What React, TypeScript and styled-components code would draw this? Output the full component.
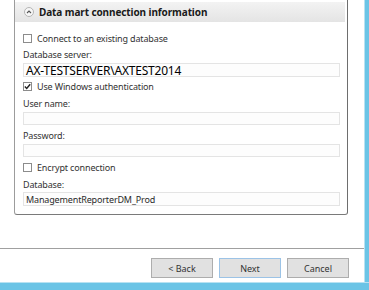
import React from "react";
import styled, { createGlobalStyle } from "styled-components";

const Global = createGlobalStyle`
  html, body { margin: 0; padding: 0; background: #ffffff; }
  body { font-family: "Noto Sans", "Open Sans", sans-serif; }
`;

const Frame = styled.div`
  width: 369px;
  height: 290px;
  display: flex;
  flex-direction: column;
  background: #ffffff;
  overflow: hidden;
`;

const Upper = styled.div`
  display: flex;
  height: 282px;
  flex: none;
`;

const Content = styled.div`
  width: 364px;
  display: flex;
  flex-direction: column;
`;

const BlueSide = styled.div`
  width: 5px;
  background: #6bc4e6;
  border-left: 1px solid #b8e2f2;
  box-sizing: border-box;
`;

const BlueBottom = styled.div`
  height: 8px;
  flex: none;
  background: #6bc4e6;
  border-top: 1px solid #b8e2f2;
  box-sizing: border-box;
`;

const MainArea = styled.div`
  height: 248px;
  flex: none;
  padding-left: 14px;
  box-sizing: border-box;
  display: flex;
  align-items: flex-start;
`;

const Panel = styled.div`
  width: 334px;
  box-sizing: border-box;
  border-left: 1px solid #9c9c9c;
  border-right: 1px solid #6e6e6e;
  border-bottom: 1px solid #7a7a7a;
  border-radius: 0 0 3px 3px;
  padding: 2px 7px 8px 0;
  display: flex;
  flex-direction: column;
  background: #ffffff;
`;

const Header = styled.div`
  height: 20px;
  flex: none;
  margin-right: -5px;
  background: linear-gradient(#f3f3f3, #e4e4e4);
  display: flex;
  align-items: center;
  padding-left: 9px;
  gap: 5px;
  font-weight: 700;
  font-size: 10px;
  letter-spacing: -0.1px;
  color: #1a1a1a;
`;

const Body = styled.div`
  padding-left: 8px;
  display: flex;
  flex-direction: column;
`;

const Row = styled.div<{ $top: number; $h?: number }>`
  margin-top: ${(p) => p.$top}px;
  height: ${(p) => p.$h ?? 14}px;
  flex: none;
  display: flex;
  align-items: center;
  gap: 5px;
  font-size: 9px;
  letter-spacing: -0.15px;
  color: #333333;
  white-space: nowrap;
`;

const Box = styled.span`
  width: 9px;
  height: 9px;
  box-sizing: border-box;
  border: 1px solid #8c8c8c;
  background: #ffffff;
  display: flex;
  align-items: center;
  justify-content: center;
`;

const Field = styled.div<{ $top: number; $h: number; $big?: boolean }>`
  margin-top: ${(p) => p.$top}px;
  height: ${(p) => p.$h}px;
  flex: none;
  box-sizing: border-box;
  border: 1px solid #e4e4e4;
  background: #fdfdfd;
  display: flex;
  align-items: center;
  padding-left: 2px;
  font-size: ${(p) => (p.$big ? 12 : 9)}px;
  letter-spacing: ${(p) => (p.$big ? -0.2 : -0.15)}px;
  color: ${(p) => (p.$big ? "#000" : "#2a2a2a")};
  white-space: nowrap;
`;

const Separator = styled.div`
  height: 1px;
  flex: none;
  background: #a0a0a0;
`;

const ButtonBar = styled.div`
  height: 33px;
  flex: none;
  display: flex;
  justify-content: flex-end;
  padding: 9px 15px 0 0;
  gap: 6px;
  box-sizing: border-box;
`;

const Button = styled.button<{ $default?: boolean }>`
  width: 62px;
  height: 20px;
  margin: 0;
  padding: 0;
  background: #e1e1e1;
  border: 1px solid ${(p) => (p.$default ? "#9cc3e6" : "#adadad")};
  font-family: "Noto Sans", "Open Sans", sans-serif;
  font-size: 9px;
  color: #333333;
`;

const Check = ({ checked }: { checked?: boolean }) => (
  <Box>
    {checked && (
      <svg width="7" height="7" viewBox="0 0 7 7">
        <path d="M0.8 3.6 L2.7 5.5 L6.2 1.2" fill="none" stroke="#222" strokeWidth="1.4" />
      </svg>
    )}
  </Box>
);

const Collapse = () => (
  <svg width="10" height="10" viewBox="0 0 10 10">
    <circle cx="5" cy="5" r="4.5" fill="#f7f7f7" stroke="#b4b4b4" strokeWidth="1" />
    <path d="M3 6 L5 4 L7 6" fill="none" stroke="#555" strokeWidth="1.1" />
  </svg>
);

export default function App() {
  return (
    <Frame>
      <Global />
      <Upper>
        <Content>
          <MainArea>
            <Panel>
              <Header>
                <Collapse />
                <span>Data mart connection information</span>
              </Header>
              <Body>
                <Row $top={9}>
                  <Check />
                  <span>Connect to an existing database</span>
                </Row>
                <Row $top={2}>Database server:</Row>
                <Field $top={2} $h={14} $big>AX-TESTSERVER\AXTEST2014</Field>
                <Row $top={2}>
                  <Check checked />
                  <span>Use Windows authentication</span>
                </Row>
                <Row $top={3}>User name:</Row>
                <Field $top={2} $h={13} />
                <Row $top={3}>Password:</Row>
                <Field $top={2} $h={13} />
                <Row $top={3}>
                  <Check />
                  <span>Encrypt connection</span>
                </Row>
                <Row $top={3}>Database:</Row>
                <Field $top={1} $h={14}>ManagementReporterDM_Prod</Field>
              </Body>
            </Panel>
          </MainArea>
          <Separator />
          <ButtonBar>
            <Button>&lt; Back</Button>
            <Button $default>Next</Button>
            <Button>Cancel</Button>
          </ButtonBar>
        </Content>
        <BlueSide />
      </Upper>
      <BlueBottom />
    </Frame>
  );
}
